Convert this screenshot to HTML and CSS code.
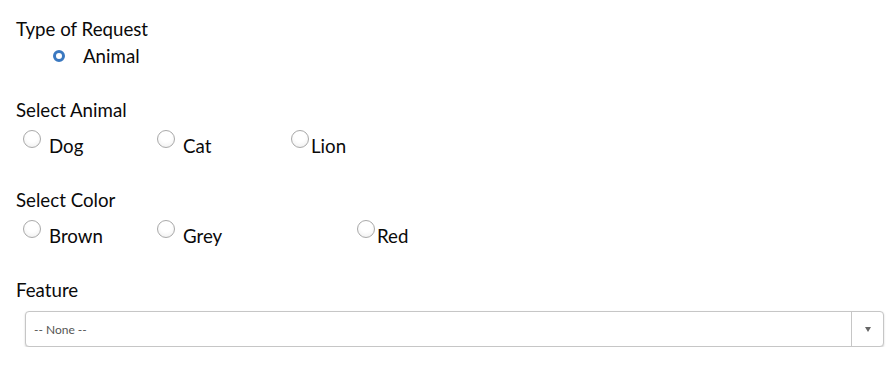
FILE: index.html
```html
<!DOCTYPE html>
<html>
<head>
<meta charset="utf-8">
<link rel="stylesheet" href="styles.css">
</head>
<body>
<div class="form">
  <div class="group">
    <div class="label">Type of Request</div>
    <div class="type-row">
      <span class="radio-checked"></span>
      <span class="type-text">Animal</span>
    </div>
  </div>

  <div class="group">
    <div class="label">Select Animal</div>
    <div class="options animal-opts">
      <div class="opt"><span class="radio"></span><span class="opt-text">Dog</span></div>
      <div class="opt"><span class="radio"></span><span class="opt-text">Cat</span></div>
      <div class="opt"><span class="radio"></span><span class="opt-text tight">Lion</span></div>
    </div>
  </div>

  <div class="group">
    <div class="label">Select Color</div>
    <div class="options color-opts">
      <div class="opt"><span class="radio"></span><span class="opt-text">Brown</span></div>
      <div class="opt"><span class="radio"></span><span class="opt-text">Grey</span></div>
      <div class="opt"><span class="radio"></span><span class="opt-text tight">Red</span></div>
    </div>
  </div>

  <div class="group">
    <div class="label">Feature</div>
    <div class="select">
      <span class="select-value">-- None --</span>
      <span class="select-btn"><span class="caret"></span></span>
    </div>
  </div>
</div>
</body>
</html>
```
FILE: styles.css
```css
html, body {
  margin: 0;
  padding: 0;
  background: #fff;
}
body {
  font-family: Lato, "Open Sans", sans-serif;
  font-size: 18.7px;
  color: #0a0a0a;
}
.form {
  display: flex;
  flex-direction: column;
  gap: 32px;
  padding: 18px 0 0 16px;
}
.group {
  display: flex;
  flex-direction: column;
}
.label {
  line-height: 22px;
  height: 22px;
}
.type-row {
  display: flex;
  align-items: center;
  height: 22px;
  margin-top: 5px;
  padding-left: 37px;
}
.radio-checked {
  width: 12px;
  height: 12px;
  box-sizing: border-box;
  border-radius: 50%;
  border: 3.5px solid #3a78c0;
  background: #fff;
}
.type-text {
  margin-left: 18px;
}
.options {
  display: grid;
  padding-left: 7px;
  height: 36px;
}
.animal-opts {
  grid-template-columns: 134px 134px auto;
}
.color-opts {
  grid-template-columns: 134px 200px auto;
}
.opt {
  display: flex;
  align-items: flex-start;
}
.radio {
  width: 18px;
  height: 18px;
  box-sizing: border-box;
  margin-top: 9px;
  border-radius: 50%;
  border: 1px solid #a9a9a9;
  background: radial-gradient(circle at 50% 35%, #ffffff 40%, #ececec 100%);
  flex: none;
}
.opt-text {
  margin-top: 14px;
  line-height: 22px;
  margin-left: 8px;
}
.opt-text.tight {
  margin-left: 2px;
}
.select {
  margin: 10px 0 0 9px;
  width: 859px;
  height: 36px;
  box-sizing: border-box;
  border: 1px solid #c6c6c6;
  border-radius: 4px;
  box-shadow: 0 1px 2px rgba(0,0,0,0.18);
  display: flex;
  align-items: stretch;
  background: #fff;
}
.select-value {
  flex: 1;
  display: flex;
  align-items: center;
  padding-left: 8px;
  font-size: 12px;
  color: #555;
}
.select-btn {
  width: 31px;
  border-left: 1px solid #c6c6c6;
  display: flex;
  align-items: center;
  justify-content: center;
}
.caret {
  width: 0;
  height: 0;
  border-left: 3px solid transparent;
  border-right: 3px solid transparent;
  border-top: 5px solid #666;
}
```
